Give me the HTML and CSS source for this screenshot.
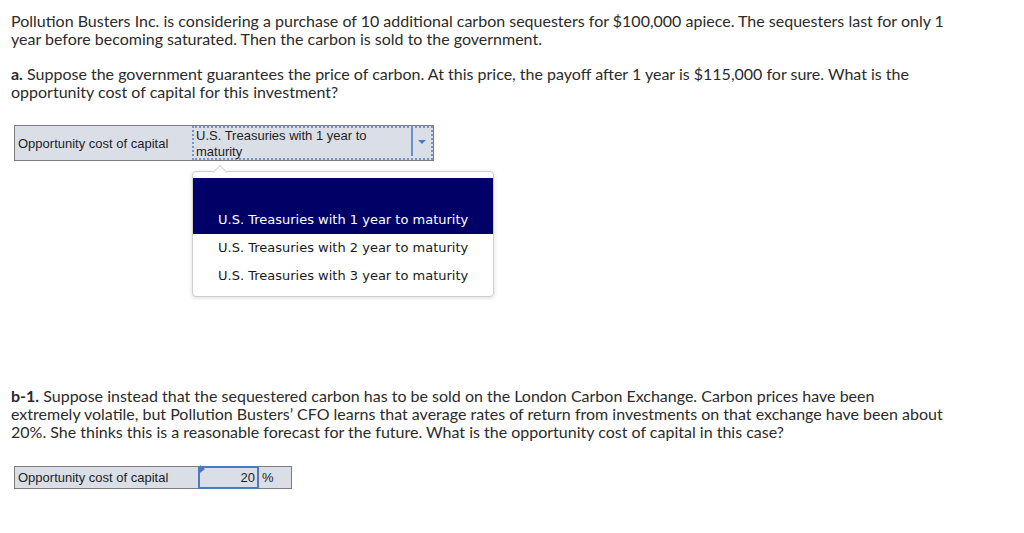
FILE: index.html
```html
<!DOCTYPE html>
<html>
<head>
<meta charset="utf-8">
<link rel="stylesheet" href="styles.css">
</head>
<body>
<div class="page">
  <p class="para first">Pollution Busters Inc. is considering a purchase of 10 additional carbon sequesters for $100,000 apiece. The sequesters last for only 1<br>year before becoming saturated. Then the carbon is sold to the government.</p>
  <p class="para qa"><b>a.</b> Suppose the government guarantees the price of carbon. At this price, the payoff after 1 year is $115,000 for sure. What is the<br>opportunity cost of capital for this investment?</p>

  <div class="answer-wrap">
    <div class="answer-table one">
      <div class="label-cell">Opportunity cost of capital</div>
      <div class="select-cell">
        <div class="select-text">U.S. Treasuries with 1 year to<br>maturity</div>
        <div class="select-btn"><span class="caret"></span></div>
      </div>
    </div>
    <div class="popup">
      <div class="notch"></div>
      <div class="option selected">U.S. Treasuries with 1 year to maturity</div>
      <div class="option">U.S. Treasuries with 2 year to maturity</div>
      <div class="option">U.S. Treasuries with 3 year to maturity</div>
    </div>
  </div>

  <p class="para qb"><b>b-1.</b> Suppose instead that the sequestered carbon has to be sold on the London Carbon Exchange. Carbon prices have been<br>extremely volatile, but Pollution Busters’ CFO learns that average rates of return from investments on that exchange have been about<br>20%. She thinks this is a reasonable forecast for the future. What is the opportunity cost of capital in this case?</p>

  <div class="answer-table two">
    <div class="label-cell">Opportunity cost of capital</div>
    <div class="input-cell"><span class="flag"></span>20</div>
    <div class="unit-cell">%</div>
  </div>
</div>
</body>
</html>
```

FILE: styles.css
```css
html, body {
  margin: 0;
  padding: 0;
  background: #ffffff;
}
.page {
  padding: 12px 0 0 11px;
  font-family: Lato, "Open Sans", sans-serif;
  color: #2b2b2b;
}
.para {
  margin: 0;
  font-size: 16px;
  line-height: 18px;
  white-space: nowrap;
}
.para b { font-weight: 700; }
.qa { margin-top: 17px; }
.answer-wrap {
  position: relative;
  margin: 24px 0 0 3px;
  width: 420px;
}
.answer-table {
  display: flex;
  border: 1px solid #7d7d7d;
  background: #dadee7;
  font-family: "Liberation Sans", Arial, sans-serif;
  font-size: 13px;
  color: #1e1e1e;
}
.answer-table.one {
  height: 34px;
  align-items: stretch;
}
.label-cell {
  display: flex;
  align-items: center;
  padding-left: 3px;
}
.one .label-cell { width: 172px; }
.select-cell {
  flex: 1;
  display: flex;
  margin-left: 2px;
  border: 2px dotted #6f97d6;
}
.select-text {
  flex: 1;
  padding: 1px 0 0 2px;
  line-height: 16px;
  font-size: 13px;
  display: flex;
  align-items: center;
}
.select-btn {
  width: 18px;
  border-left: 2px solid #6a8fcc;
  margin: 0 0 2px 0;
  display: flex;
  align-items: center;
  justify-content: center;
}
.caret {
  width: 0;
  height: 0;
  border-left: 4px solid transparent;
  border-right: 4px solid transparent;
  border-top: 4px solid #4a78c2;
}
.popup {
  position: absolute;
  left: 178px;
  top: 46px;
  width: 302px;
  height: 126px;
  background: #fff;
  border: 1px solid #cfcfcf;
  border-radius: 4px;
  box-shadow: 0 1px 4px rgba(0,0,0,0.15);
  padding-top: 6px;
  box-sizing: border-box;
  font-family: "DejaVu Sans", Verdana, sans-serif;
  font-size: 13px;
  color: #1a1a1a;
}
.notch {
  position: absolute;
  left: 22px;
  top: -5px;
  width: 9px;
  height: 9px;
  background: #fff;
  border-left: 1px solid #d4d4d4;
  border-top: 1px solid #d4d4d4;
  transform: rotate(45deg);
}
.option {
  height: 28px;
  line-height: 28px;
  padding-left: 25px;
}
.option.selected {
  height: 56px;
  line-height: 18px;
  box-sizing: border-box;
  padding-top: 33px;
  background: #000066;
  color: #ffffff;
  position: relative;
}
.qb { margin-top: 226px; }
.answer-table.two {
  margin: 25px 0 0 3px;
  width: 276px;
  height: 21px;
}
.two .label-cell { width: 180px; }
.input-cell {
  position: relative;
  width: 55px;
  border: 2px solid #4c79c2;
  margin-top: -1px;
  margin-bottom: -1px;
  text-align: right;
  padding-right: 2px;
  line-height: 19px;
  font-size: 13px;
}
.flag {
  position: absolute;
  left: 0;
  top: 0;
  width: 0;
  height: 0;
  border-top: 4px solid transparent;
  border-bottom: 4px solid transparent;
  border-left: 5px solid #4c79c2;
  top: -3px;
}
.unit-cell {
  flex: 1;
  padding-left: 3px;
  line-height: 21px;
  font-size: 13px;
}
```
